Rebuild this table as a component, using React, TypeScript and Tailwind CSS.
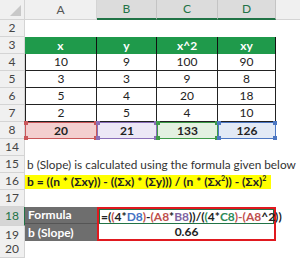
import React from 'react'

const rowHead = 'w-[25px] shrink-0 flex items-center justify-center border-r border-b border-[#d4d4d4] bg-[#f0f0f0] text-[#444] text-[12px]'

const RowNum = ({ n, active }: { n: number; active?: boolean }) => (
    <div className={active ? rowHead + ' !bg-[#d6d6d6] !text-[#217346] !border-r-[#217346]' : rowHead}>{n}</div>
)

const data = [
    ['10', '9', '100', '90'],
    ['3', '3', '9', '8'],
    ['5', '4', '20', '18'],
    ['2', '5', '4', '10'],
]

const widths = ['w-[72px]', 'w-[60px]', 'w-[61px]', 'w-[58px]']

const Corner = ({ color }: { color: string }) => (
    <>
        <span className={`absolute -left-[2px] -top-[2px] size-[4px] ${color}`} />
        <span className={`absolute -right-[2px] -top-[2px] size-[4px] ${color}`} />
        <span className={`absolute -left-[2px] -bottom-[2px] size-[4px] ${color}`} />
        <span className={`absolute -right-[2px] -bottom-[2px] size-[4px] ${color}`} />
    </>
)

const totals = [
    { v: '20', cls: 'bg-[#f4cfcf] border-[#c9575a]', dot: 'bg-[#c9575a]' },
    { v: '21', cls: 'bg-[#ece8f6] border-[#8a6fb8]', dot: 'bg-[#8a6fb8]' },
    { v: '133', cls: 'bg-[#e3f1e1] border-[#3e9a48]', dot: 'bg-[#3e9a48]' },
    { v: '126', cls: 'bg-[#e2eaf6] border-[#4c77c2]', dot: 'bg-[#4c77c2]' },
]

export default function App() {
    return (
        <div className="w-[300px] h-[259px] overflow-hidden bg-white font-['Lato',sans-serif] text-[12px] text-[#222]">
            {/* column headers */}
            <div className="flex h-[20px]">
                <div className="w-[25px] shrink-0 relative bg-[#f0f0f0] border-r border-b border-[#d4d4d4]">
                    <svg className="absolute right-[3px] bottom-[3px]" width="11" height="11" viewBox="0 0 11 11">
                        <polygon points="11,0 11,11 0,11" fill="#c8c8c8" />
                    </svg>
                </div>
                <div className="w-[72px] shrink-0 flex items-center justify-center bg-[#f0f0f0] border-r border-b border-[#d4d4d4] text-[#555] text-[12px]">A</div>
                <div className="w-[60px] shrink-0 flex items-center justify-center bg-[#dcdcdc] border-r border-[#c4c4c4] border-b-2 border-b-[#217346] text-[#217346] text-[12px]">B</div>
                <div className="w-[61px] shrink-0 flex items-center justify-center bg-[#dcdcdc] border-r border-[#c4c4c4] border-b-2 border-b-[#217346] text-[#217346] text-[12px]">C</div>
                <div className="w-[58px] shrink-0 flex items-center justify-center bg-[#dcdcdc] border-r border-[#c4c4c4] border-b-2 border-b-[#217346] text-[#217346] text-[12px]">D</div>
                <div className="flex-1 bg-[#f0f0f0] border-b border-[#d4d4d4]" />
            </div>

            <div className="flex h-[17px]"><RowNum n={2} /></div>

            <div className="flex h-[17px]">
                <RowNum n={3} />
                {['x', 'y', 'x^2', 'xy'].map((h, i) => (
                    <div key={h} className={`${widths[i]} shrink-0 flex items-center justify-center bg-[#1f9a4b] text-white font-bold border-r border-[#111]`}>{h}</div>
                ))}
            </div>

            {data.map((row, r) => (
                <div key={r} className="flex h-[17px]">
                    <RowNum n={r + 4} />
                    {row.map((v, i) => (
                        <div key={i} className={`${widths[i]} shrink-0 flex items-center justify-center border-r border-b border-[#222] ${i === 0 ? 'border-l' : ''}`}>{v}</div>
                    ))}
                </div>
            ))}

            <div className="flex h-[17px]">
                <RowNum n={8} />
                {totals.map((t, i) => (
                    <div key={i} className={`${widths[i]} shrink-0 relative flex items-center justify-center border font-bold ${t.cls}`}>
                        {t.v}
                        <Corner color={t.dot} />
                    </div>
                ))}
            </div>

            <div className="flex h-[17px]"><RowNum n={14} /></div>

            <div className="flex h-[17px]">
                <RowNum n={15} />
                <div className="flex items-center pl-[2px] whitespace-nowrap text-[11.8px] text-[#333]">b (Slope) is calculated using the formula given below</div>
            </div>

            <div className="flex h-[17px]">
                <RowNum n={16} />
                <div className="flex items-center">
                    <div className="w-[246px] h-[14px] flex items-center pl-[2px] bg-[#ffff00] font-bold whitespace-nowrap">
                        b = ((n * (Σxy)) - ((Σx) * (Σy))) / (n * (Σx<sup className="text-[7px]">2</sup>)) - (Σx)<sup className="text-[7px]">2</sup>
                    </div>
                </div>
            </div>

            <div className="flex h-[17px]"><RowNum n={17} /></div>

            <div className="flex h-[34px]">
                <div className="flex flex-col">
                    <RowNum n={18} active />
                    <RowNum n={19} />
                </div>
                <div className="w-[72px] shrink-0 flex flex-col bg-[#6e6e6e] text-white font-bold">
                    <div className="h-[17px] flex items-center pl-[3px] border-b border-[#555]">Formula</div>
                    <div className="h-[17px] flex items-center pl-[3px]">b (Slope)</div>
                </div>
                <div className="w-[179px] shrink-0 flex flex-col border-2 border-[#e0191f] font-bold">
                    <div className="h-[15px] flex items-center whitespace-nowrap border border-[#217346] pl-[1px]">
                        <span>=(</span>
                        <span className="text-[#c0504d]">(</span>
                        <span>4*</span>
                        <span className="text-[#4472c4]">D8</span>
                        <span className="text-[#c0504d]">)</span>
                        <span>-</span>
                        <span className="text-[#c0504d]">(A8</span>
                        <span>*</span>
                        <span className="text-[#8064a2]">B8</span>
                        <span>))/(</span>
                        <span className="text-[#2e8b57]">(</span>
                        <span>4*</span>
                        <span className="text-[#2e8b57]">C8</span>
                        <span className="text-[#c0504d]">)-(A8</span>
                        <span>^2))</span>
                    </div>
                    <div className="h-[15px] flex items-center justify-center">0.66</div>
                </div>
            </div>

            <div className="flex h-[17px]"><RowNum n={20} /></div>
        </div>
    )
}
